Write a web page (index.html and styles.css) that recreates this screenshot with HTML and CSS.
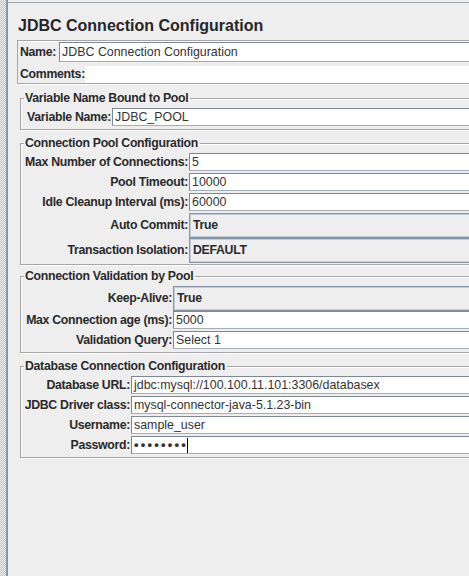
FILE: index.html
```html
<!DOCTYPE html>
<html>
<head>
<meta charset="utf-8">
<link rel="stylesheet" href="styles.css">
</head>
<body>
<div class="window">
  <div class="dots"></div>
  <div class="bar"></div>
  <div class="main">
    <h1 class="title">JDBC Connection Configuration</h1>
    <div class="namebox">
      <div class="nrow name-row">
        <span class="nlabel">Name:</span>
        <div class="field tall">JDBC Connection Configuration</div>
      </div>
      <div class="nrow comments-row">
        <span class="nlabel">Comments:</span>
        <div class="comments"></div>
      </div>
    </div>

    <fieldset class="group g1">
      <legend>Variable Name Bound to Pool</legend>
      <div class="form cols-var">
        <div class="row"><span class="lbl">Variable Name:</span><div class="field">JDBC_POOL</div></div>
      </div>
    </fieldset>

    <fieldset class="group g2">
      <legend>Connection Pool Configuration</legend>
      <div class="form cols-pool">
        <div class="row"><span class="lbl">Max Number of Connections:</span><div class="field">5</div></div>
        <div class="row"><span class="lbl">Pool Timeout:</span><div class="field">10000</div></div>
        <div class="row"><span class="lbl">Idle Cleanup Interval (ms):</span><div class="field">60000</div></div>
        <div class="row combo-row"><span class="lbl">Auto Commit:</span><div class="combo">True</div></div>
        <div class="row combo-row"><span class="lbl">Transaction Isolation:</span><div class="combo">DEFAULT</div></div>
      </div>
    </fieldset>

    <fieldset class="group g3">
      <legend>Connection Validation by Pool</legend>
      <div class="form cols-valid">
        <div class="row combo-row"><span class="lbl">Keep-Alive:</span><div class="combo">True</div></div>
        <div class="row"><span class="lbl">Max Connection age (ms):</span><div class="field">5000</div></div>
        <div class="row"><span class="lbl">Validation Query:</span><div class="field">Select 1</div></div>
      </div>
    </fieldset>

    <fieldset class="group g4">
      <legend>Database Connection Configuration</legend>
      <div class="form cols-db">
        <div class="row"><span class="lbl">Database URL:</span><div class="field">jdbc:mysql://100.100.11.101:3306/databasex</div></div>
        <div class="row"><span class="lbl">JDBC Driver class:</span><div class="field">mysql-connector-java-5.1.23-bin</div></div>
        <div class="row"><span class="lbl">Username:</span><div class="field">sample_user</div></div>
        <div class="row"><span class="lbl">Password:</span><div class="field"><span class="pw">••••••••</span><span class="caret"></span></div></div>
      </div>
    </fieldset>
  </div>
</div>
</body>
</html>
```

FILE: styles.css
```css
html, body {
  margin: 0;
  padding: 0;
  background: #eeeeee;
}
body {
  font-family: "Liberation Sans", Arial, sans-serif;
  color: #2a2a2a;
  font-size: 12.4px;
}
.window {
  display: flex;
  width: 469px;
  height: 576px;
  overflow: hidden;
  background: #eeeeee;
}
.dots {
  flex: 0 0 6px;
  background: repeating-conic-gradient(#c4c4c4 0 25%, #eeeeee 0 50%) 0 0 / 2px 2px;
}
.bar {
  flex: 0 0 2px;
  background: #8e959e;
}
.main {
  flex: 1 1 0;
  min-width: 0;
  margin-right: -24px;
  margin-top: 2px;
  border-top: 1px solid #9ea4ab;
  padding-left: 9px;
}
.title {
  margin: 13px 0 5px 1px;
  font-size: 16px;
  line-height: 19px;
  font-weight: bold;
  color: #262626;
}
.namebox {
  border: 1px solid #a6a6a6;
  box-shadow: 0 1px 0 #ffffff, inset 0 1px 0 #ffffff;
  padding: 1px 0 0 2px;
}
.nrow {
  display: flex;
  align-items: center;
}
.name-row {
  gap: 3px;
  height: 20px;
}
.comments-row {
  margin-top: 3px;
  height: 18px;
}
.nlabel,
.lbl,
.group legend,
.combo {
  font-weight: bold;
  font-size: 12.3px;
  letter-spacing: -0.3px;
}
.comments {
  flex: 1;
  height: 17px;
  background: #ffffff;
  margin-left: 0;
}
.field {
  flex: 1;
  box-sizing: border-box;
  height: 18px;
  line-height: 16px;
  background: #ffffff;
  border: 1px solid #a3aebb;
  border-top-color: #7c8896;
  border-left-color: #7c8896;
  padding-left: 2px;
  color: #333333;
  white-space: nowrap;
  overflow: hidden;
  display: flex;
  align-items: center;
}
.field.tall {
  height: 20px;
}
.group {
  margin: 6px 0 0 3px;
  padding: 3px 0 1px 3px;
  border: 1px solid #a6a6a6;
  box-shadow: 1px 1px 0 #ffffff, inset 1px 1px 0 #ffffff;
  min-width: 0;
}
.g1 { margin-top: 7px; }
.g3 { margin-top: 4px; }
.group legend {
  padding: 0 2px 0 1px;
  line-height: 14px;
  color: #2a2a2a;
}
.form {
  display: grid;
}
.row {
  display: grid;
  grid-template-columns: subgrid;
  grid-column: 1 / -1;
  height: 20px;
  align-items: start;
}
.combo-row {
  height: 25px;
}
.cols-var { grid-template-columns: 88px 1fr; }
.cols-pool { grid-template-columns: 165px 1fr; }
.cols-valid { grid-template-columns: 149px 1fr; }
.cols-db { grid-template-columns: 107px 1fr; }
.lbl {
  text-align: right;
  padding-right: 1px;
  line-height: 18px;
  white-space: nowrap;
}
.combo-row .lbl {
  line-height: 25px;
}
.combo {
  box-sizing: border-box;
  height: 25px;
  line-height: 22px;
  border: 1px solid #8796a6;
  box-shadow: inset 0 0 0 1px #c2cfdb;
  background: #eeeeee;
  padding-left: 3px;
  color: #2a2a2a;
}
.pw {
  font-weight: bold;
  font-size: 13px;
  letter-spacing: 2.2px;
  color: #333333;
}
.caret {
  display: inline-block;
  width: 0;
  height: 15px;
  border-left: 1px solid #000000;
  margin-left: -1px;
}
```
